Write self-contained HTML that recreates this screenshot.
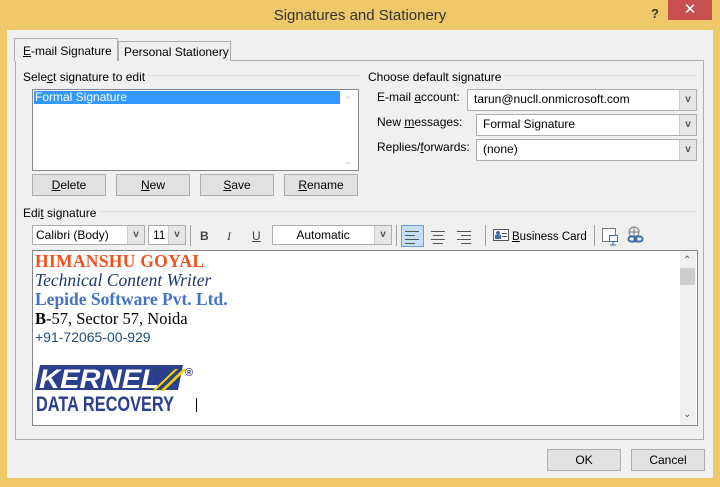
<!DOCTYPE html>
<html><head><style>
*{margin:0;padding:0;box-sizing:border-box}
body{width:720px;height:487px;background:#EFC86A;font-family:"Liberation Sans",sans-serif;font-size:12px;color:#000;position:relative;overflow:hidden}
.a{position:absolute}
.t{position:absolute;white-space:nowrap;font-size:12px;line-height:14px}
.btn{position:absolute;background:#E1E1E1;border:1px solid #ADADAD;text-align:center;font-size:12px;line-height:20px}
.cb{position:absolute;background:#fff;border:1px solid #ABADB3;font-size:12px;line-height:19px;padding-left:6px;white-space:nowrap}
.cb i{position:absolute;right:0;top:0;bottom:0;width:17px;background:#E6E6E6;border-left:1px solid #ccc;font-style:normal;text-align:center;font-size:10px;font-weight:bold;color:#555}
.line{position:absolute;height:1px;background:#D5DFE5}
.sep{position:absolute;width:1px;background:#A0A0A0;top:225px;height:21px}
u{text-decoration:underline}
.sig{position:absolute;left:35px;font-family:"Liberation Serif",serif;font-size:17.5px;line-height:19px;white-space:nowrap}
</style></head><body>
<div class="a" style="left:7px;top:30px;width:706px;height:448px;background:#F0F0F0"></div>
<div class="t" style="left:0;width:720px;top:7px;text-align:center;font-size:15px;line-height:18px;color:#333">Signatures and Stationery</div>
<div class="t" style="left:651px;top:7px;font-weight:bold;font-size:13px;color:#333">?</div>
<div class="a" style="left:668px;top:0;width:44px;height:20px;background:#C75050;color:#fff;text-align:center;font-size:15px;line-height:20px">✕</div>

<div class="a" style="left:15px;top:60px;width:689px;height:380px;border:1px solid #ADADAD;background:#F0F0F0"></div>
<div class="a" style="left:118px;top:41px;width:113px;height:20px;border:1px solid #ADADAD;border-bottom:none;background:#F0F0F0"></div>
<div class="t" style="left:124px;top:45px">Personal Stationery</div>
<div class="a" style="left:14px;top:38px;width:104px;height:23px;border:1px solid #ADADAD;border-bottom:none;background:#F0F0F0"></div>
<div class="t" style="left:23px;top:44px"><u>E</u>-mail Signature</div>

<div class="t" style="left:23px;top:70px">Sele<u>c</u>t signature to edit</div>
<div class="line" style="left:147px;top:75px;width:213px"></div>
<div class="a" style="left:32px;top:89px;width:327px;height:82px;background:#fff;border:1px solid #828790"></div>
<div class="a" style="left:34px;top:91px;width:306px;height:13px;background:#3399FF"></div>
<div class="t" style="left:35px;top:91px;color:#fff;line-height:13px">Formal Signature</div>
<div class="t" style="left:344px;top:93px;color:#BBB;font-size:9px">⌃</div>
<div class="t" style="left:344px;top:154px;color:#BBB;font-size:9px">⌄</div>
<div class="btn" style="left:32px;top:174px;width:74px;height:22px"><u>D</u>elete</div>
<div class="btn" style="left:116px;top:174px;width:74px;height:22px"><u>N</u>ew</div>
<div class="btn" style="left:200px;top:174px;width:74px;height:22px"><u>S</u>ave</div>
<div class="btn" style="left:284px;top:174px;width:74px;height:22px"><u>R</u>ename</div>

<div class="t" style="left:368px;top:70px">Choose default signature</div>
<div class="line" style="left:504px;top:75px;width:193px"></div>
<div class="t" style="left:377px;top:90px">E-mail <u>a</u>ccount:</div>
<div class="cb" style="left:467px;top:89px;width:230px;height:22px">tarun@nucll.onmicrosoft.com<i>v</i></div>
<div class="t" style="left:377px;top:115px">New <u>m</u>essages:</div>
<div class="cb" style="left:476px;top:114px;width:221px;height:22px">Formal Signature<i>v</i></div>
<div class="t" style="left:377px;top:140px">Replies/<u>f</u>orwards:</div>
<div class="cb" style="left:476px;top:139px;width:221px;height:22px">(none)<i>v</i></div>

<div class="t" style="left:23px;top:206px">Edi<u>t</u> signature</div>
<div class="line" style="left:100px;top:211px;width:597px"></div>

<div class="cb" style="left:32px;top:225px;width:113px;height:20px;padding-left:3px;line-height:18px">Calibri (Body)<i>v</i></div>
<div class="cb" style="left:148px;top:225px;width:38px;height:20px;padding-left:4px;line-height:18px">11<i>v</i></div>
<div class="sep" style="left:190px"></div>
<div class="t" style="left:200px;top:229px;font-weight:bold;color:#444">B</div>
<div class="t" style="left:227px;top:229px;font-style:italic;color:#444;font-family:'Liberation Serif',serif">I</div>
<div class="t" style="left:252px;top:229px;text-decoration:underline;color:#444">U</div>
<div class="cb" style="left:272px;top:225px;width:120px;height:20px;text-align:center;padding:0 18px 0 0;line-height:18px">Automatic<i>v</i></div>
<div class="sep" style="left:396px"></div>
<div class="a" style="left:401px;top:225px;width:23px;height:22px;background:#C4E0F9;border:1px solid #62A2E4"></div>
<svg class="a" style="left:0;top:0" width="720" height="487">
<g stroke="#555" stroke-width="1">
<path d="M405 231.5h14M405 235.5h10M405 239.5h14M405 243.5h10"/>
<path d="M431 231.5h14M433 235.5h10M431 239.5h14M433 243.5h10"/>
<path d="M457 231.5h14M461 235.5h10M457 239.5h14M461 243.5h10"/>
</g>
<rect x="493.5" y="229.5" width="15" height="11" fill="#fff" stroke="#555"/>
<circle cx="498" cy="233" r="2" fill="#3A6EA5"/><rect x="495" y="235" width="6" height="4" fill="#3A6EA5"/>
<path d="M502 233.5h5M502 236.5h5" stroke="#555"/>
<rect x="602.5" y="228.5" width="13" height="13" fill="#fff" stroke="#777"/>
<rect x="609.5" y="235.5" width="8" height="6" fill="#fff" stroke="#3A6EA5"/>
<path d="M613 242v3M610 245h6" stroke="#3A6EA5"/>
<circle cx="634" cy="232" r="5" fill="none" stroke="#777"/>
<path d="M629 232h10M634 227v10" stroke="#777"/>
<rect x="628.5" y="236.5" width="8" height="5" rx="2.5" fill="none" stroke="#3A6EA5" stroke-width="2"/>
<rect x="634.5" y="236.5" width="8" height="5" rx="2.5" fill="none" stroke="#3A6EA5" stroke-width="2"/>
</svg>
<div class="sep" style="left:485px"></div>
<div class="t" style="left:512px;top:230px;font-size:11.5px"><u>B</u>usiness Card</div>
<div class="sep" style="left:594px"></div>

<div class="a" style="left:32px;top:250px;width:666px;height:176px;background:#fff;border:1px solid #828790"></div>
<div class="a" style="left:680px;top:251px;width:16px;height:174px;background:#F0F0F0"></div>
<div class="a" style="left:680px;top:268px;width:15px;height:17px;background:#CDCDCD"></div>
<div class="t" style="left:683px;top:254px;font-size:10px;color:#555">⌃</div>
<div class="t" style="left:683px;top:408px;font-size:10px;color:#555">⌄</div>

<div class="sig" style="top:252px;color:#F4511E;font-weight:bold;letter-spacing:0.3px">HIMANSHU GOYAL</div>
<div class="sig" style="top:271px;color:#1F3A6E;font-style:italic">Technical Content Writer</div>
<div class="sig" style="top:290px;color:#4472C4;font-weight:bold">Lepide Software Pvt. Ltd.</div>
<div class="sig" style="top:309px;color:#000;font-size:16.5px"><b>B</b>-57, Sector 57, Noida</div>
<div class="sig" style="top:328px;color:#1F4E79;font-family:'Liberation Sans',sans-serif;font-size:14px">+91-72065-00-929</div>

<svg class="a" style="left:0;top:0" width="720" height="487">
<path d="M40 365H183L178 390H35Z" fill="#2B3F8C"/>
<text x="39" y="388" fill="#fff" font-family="Liberation Sans" font-weight="bold" font-style="italic" font-size="27" textLength="120" lengthAdjust="spacingAndGlyphs">KERNEL</text>
<path d="M160 391L183 369L187 369L164 391Z" fill="#F2D200"/>
<path d="M152 391L175 369L178 369L155 391Z" fill="#F2D200"/>
<text x="185" y="376" fill="#2B3F8C" font-family="Liberation Sans" font-weight="bold" font-size="11">®</text>
<text x="36" y="411" fill="#2B3F8C" font-family="Liberation Sans" font-weight="bold" font-size="21" textLength="138" lengthAdjust="spacingAndGlyphs">DATA RECOVERY</text>
<path d="M196.5 398v14" stroke="#000"/>
</svg>

<div class="btn" style="left:547px;top:449px;width:74px;height:22px">OK</div>
<div class="btn" style="left:631px;top:449px;width:74px;height:22px">Cancel</div>
</body></html>
